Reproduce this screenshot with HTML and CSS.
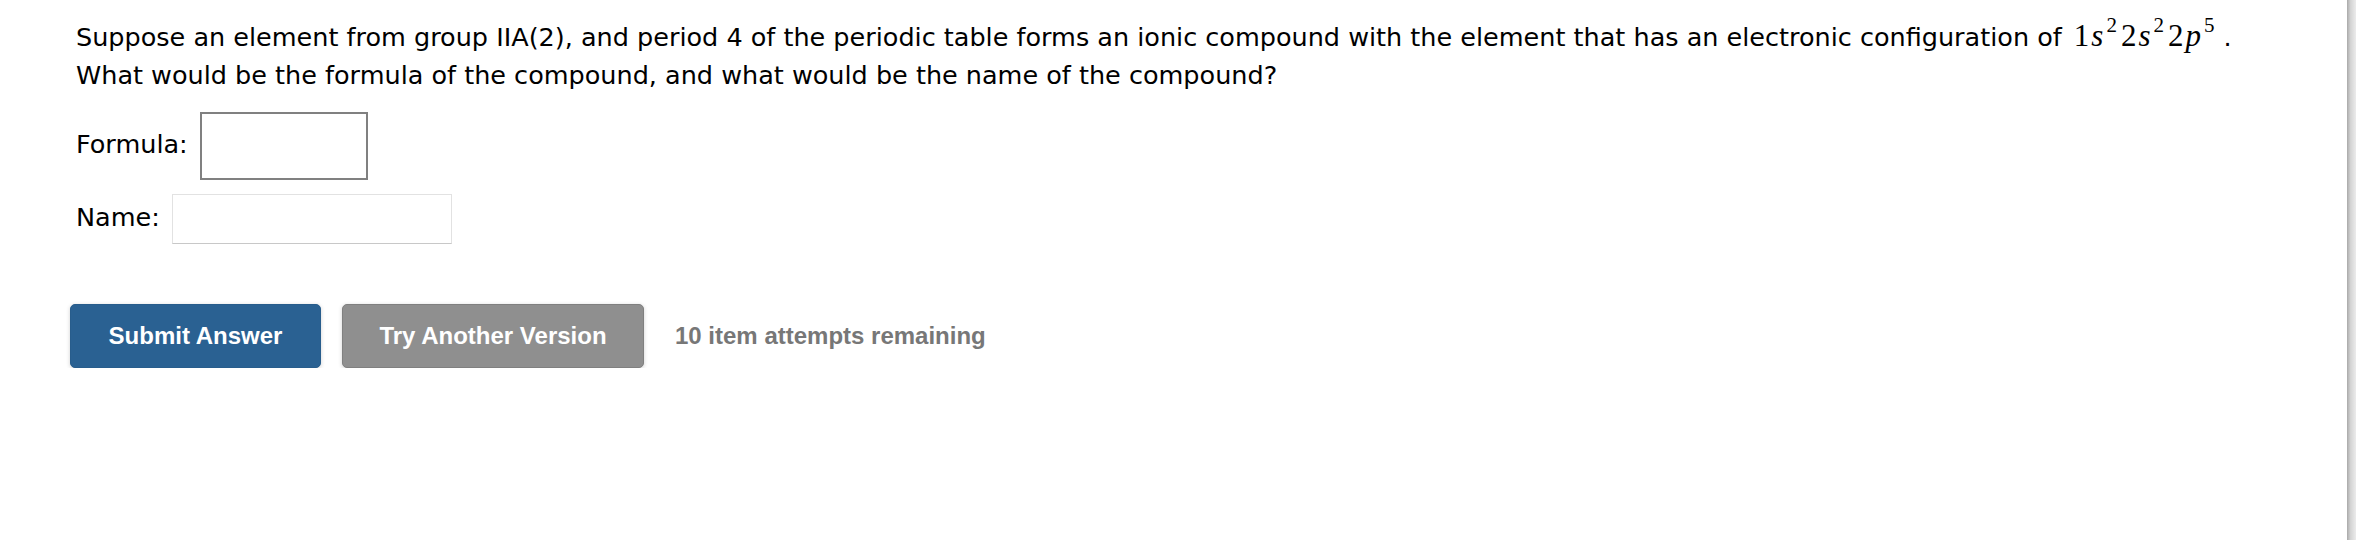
FILE: index.html
```html
<!DOCTYPE html>
<html lang="en">
<head>
<meta charset="utf-8">
<title>Question</title>
<link rel="stylesheet" href="styles.css">
</head>
<body>
<div class="page">
  <p class="question">Suppose an element from group IIA(2), and period 4 of the periodic table forms an ionic compound with the element that has an electronic configuration of <span class="math">1<i>s</i><sup>2</sup>2<i>s</i><sup>2</sup>2<i>p</i><sup>5</sup></span><span class="dot">.</span><br>What would be the formula of the compound, and what would be the name of the compound?</p>
  <div class="field field-formula">
    <label class="label" for="formula">Formula:</label>
    <input id="formula" class="input input-formula" type="text">
  </div>
  <div class="field field-name">
    <label class="label" for="name">Name:</label>
    <input id="name" class="input input-name" type="text">
  </div>
  <div class="actions">
    <button class="btn btn-submit" type="button">Submit Answer</button>
    <button class="btn btn-try" type="button">Try Another Version</button>
    <span class="attempts">10 item attempts remaining</span>
  </div>
</div>
<div class="edge"></div>
</body>
</html>
```
FILE: styles.css
```css
html, body {
  margin: 0;
  padding: 0;
  background: #ffffff;
}
.page {
  padding: 18px 0 0 76px;
  font-family: "DejaVu Sans", Verdana, sans-serif;
  font-size: 25.5px;
  color: #000;
}
.question {
  margin: 0;
  line-height: 38px;
}
.math {
  font-family: "Liberation Serif", "DejaVu Serif", serif;
  font-size: 31px;
  line-height: 1;
  margin-left: 4px;
}
.math i {
  font-style: italic;
  margin-left: 2px;
  margin-right: 1px;
}
.math sup {
  font-size: 21px;
  line-height: 0;
  vertical-align: 0;
  position: relative;
  top: -14px;
  margin-left: 2px;
  margin-right: 4px;
}
.dot {
  margin-left: 5px;
}
.field {
  display: flex;
  align-items: center;
  gap: 12px;
}
.field-formula {
  margin-top: 18px;
}
.field-name {
  margin-top: 14px;
}
.label {
  line-height: 39px;
  position: relative;
  top: -2px;
}
.input {
  box-sizing: border-box;
  margin: 0;
  padding: 0 6px;
  background: #fff;
  font: inherit;
  outline: none;
}
.input-formula {
  width: 168px;
  height: 68px;
  border: 2px solid #808080;
}
.input-name {
  width: 280px;
  height: 50px;
  border: 1px solid #e2e2e2;
  border-bottom-color: #c8c8c8;
}
.actions {
  display: flex;
  align-items: center;
  margin-top: 60px;
  margin-left: -6px;
}
.btn {
  box-sizing: border-box;
  height: 64px;
  padding: 0;
  border-radius: 5px;
  font-family: "Liberation Sans", Arial, sans-serif;
  font-weight: bold;
  font-size: 24px;
  white-space: nowrap;
  color: #fff;
  cursor: pointer;
  box-shadow: 0 1px 4px rgba(0, 0, 0, 0.18);
}
.btn-submit {
  width: 251px;
  background: #2a6192;
  border: 1px solid #285d8c;
}
.btn-try {
  width: 302px;
  margin-left: 21px;
  background: #8f8f8f;
  border: 1px solid #808080;
}
.attempts {
  margin-left: 31px;
  font-family: "Liberation Sans", Arial, sans-serif;
  font-weight: bold;
  font-size: 24px;
  color: #777777;
}
.edge {
  position: fixed;
  top: 0;
  right: 0;
  width: 9px;
  height: 100%;
  background: linear-gradient(to right, #a9a9a9, #d4d4d4 40%, #ececec);
}
```
